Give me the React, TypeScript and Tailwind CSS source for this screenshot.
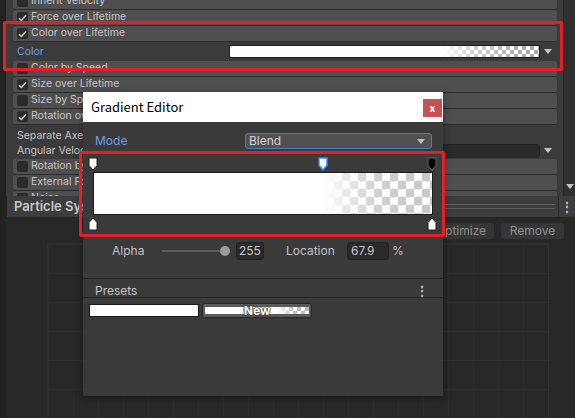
import React from "react";

const UI = "font-['Inter','Noto_Sans',sans-serif]";

function Check() {
  return (
    <svg width="9" height="8" viewBox="0 0 9 8">
      <path d="M1 4.2 L3.4 6.5 L8 1.2" fill="none" stroke="#d2d2d2" strokeWidth="1.4" />
    </svg>
  );
}

function Arrow({ color = "#c4c4c4" }: { color?: string }) {
  return (
    <svg width="8" height="5" viewBox="0 0 8 5">
      <path d="M0 0 H8 L4 5 Z" fill={color} />
    </svg>
  );
}

function ModuleRow({ label, checked }: { label: string; checked?: boolean }) {
  return (
    <div className="flex h-[16px] shrink-0 items-center rounded-[3px] border-b border-[#2b2b2b] bg-[#4f4f4f] pl-[4px]">
      <div className="flex h-[11px] w-[11px] items-center justify-center rounded-[2px] bg-[#2b2b2b]">
        {checked && <Check />}
      </div>
      <span className="ml-[3px] text-[10.5px] leading-none text-[#c6c6c6]">{label}</span>
    </div>
  );
}

function TopMarker({ left, kind }: { left: string; kind: "white" | "sel" | "black" }) {
  const fill = kind === "black" ? "#000" : "#fff";
  const stroke = kind === "sel" ? "#2f8cf0" : kind === "black" ? "#6a6a6a" : "#1e1e1e";
  return (
    <svg width="10" height="14" viewBox="0 0 10 14" className="absolute top-0" style={{ left }}>
      <path d="M1 1 H9 V8.5 L5 13 L1 8.5 Z" fill={fill} stroke={stroke} strokeWidth={kind === "sel" ? 1.5 : 1} />
    </svg>
  );
}

function BottomMarker({ left }: { left: string }) {
  return (
    <svg width="10" height="14" viewBox="0 0 10 14" className="absolute top-0" style={{ left }}>
      <path d="M1 13 H9 V5.5 L5 1 L1 5.5 Z" fill="#fff" stroke="#1e1e1e" strokeWidth="1" />
    </svg>
  );
}

function Checker({ cell, fade }: { cell: string; fade: string }) {
  return (
    <div className={`relative h-full w-full ${cell}`}>
      <div className={`absolute inset-0 ${fade}`} />
    </div>
  );
}

function GradientEditor() {
  return (
    <div className={`absolute left-[83px] top-[92px] flex h-[304px] w-[360px] flex-col overflow-hidden bg-[#3a3a3a] shadow-[0_2px_8px_rgba(0,0,0,0.4)] ${UI}`}>
      <div className="relative flex h-[30px] shrink-0 items-center bg-white pl-[8px]">
        <span className="font-['Noto_Sans_CJK_SC','Noto_Sans',sans-serif] text-[13px] text-black">Gradient Editor</span>
        <div className="absolute right-[1px] top-[7px] flex h-[18px] w-[19px] items-center justify-center bg-[#c75050] text-[10px] font-bold leading-none text-white">
          x
        </div>
      </div>

      <div className="mt-[11px] flex h-[16px] shrink-0 items-center justify-between pl-[12px] pr-[11px]">
        <span className="text-[12px] text-[#6f9ee4]">Mode</span>
        <div className="flex h-[16px] w-[187px] items-center justify-between rounded-[3px] border border-[#3b7fd6] bg-[#515151] pl-[3px] pr-[6px]">
          <span className="text-[12px] leading-none text-[#d4d4d4]">Blend</span>
          <Arrow color="#bdbdbd" />
        </div>
      </div>

      <div className="ml-[5px] mt-[8px] w-[349px] shrink-0">
        <div className="relative h-[14px]">
          <TopMarker left="0px" kind="white" />
          <TopMarker left="230px" kind="sel" />
          <TopMarker left="339px" kind="black" />
        </div>
        <div className="ml-[5px] mt-[1px] h-[43px] w-[340px] border border-[#1c1c1c]">
          <Checker
            cell="bg-[conic-gradient(#c8c8c8_25%,#ffffff_0_50%,#c8c8c8_0_75%,#ffffff_0)] bg-[length:16px_16px]"
            fade="bg-[linear-gradient(90deg,#fff_0%,#fff_68%,rgba(255,255,255,0.6)_74%,rgba(255,255,255,0.15)_84%,rgba(255,255,255,0)_100%)]"
          />
        </div>
        <div className="relative mt-[2px] h-[14px]">
          <BottomMarker left="0px" />
          <BottomMarker left="339px" />
        </div>
      </div>

      <div className="mt-[11px] flex h-[18px] shrink-0 items-center pl-[29px]">
        <span className="w-[50px] text-[12px] text-[#c2c2c2]">Alpha</span>
        <div className="relative flex h-[18px] w-[69px] items-center">
          <div className="h-[2px] w-[64px] bg-[#5e5e5e]" />
          <div className="absolute left-[58px] h-[10px] w-[10px] rounded-full bg-[#9c9c9c]" />
        </div>
        <div className="ml-[5px] flex h-[18px] w-[28px] items-center rounded-[3px] border border-[#222] bg-[#2a2a2a] pl-[2px] text-[12px] text-[#c8c8c8]">
          255
        </div>
        <span className="ml-[22px] w-[61px] text-[12px] text-[#c2c2c2]">Location</span>
        <div className="flex h-[18px] w-[42px] items-center rounded-[3px] border border-[#222] bg-[#2a2a2a] pl-[3px] text-[12px] text-[#c8c8c8]">
          67.9
        </div>
        <span className="ml-[3px] text-[12px] text-[#c2c2c2]">%</span>
      </div>

      <div className="mt-[18px] flex h-[20px] shrink-0 items-center justify-between border-y border-[#262626] pl-[12px] pr-[15px] pt-[5px]">
        <span className="text-[12px] leading-none text-[#c4c4c4]">Presets</span>
        <span className="text-[12px] font-bold leading-none text-[#c4c4c4]">⋮</span>
      </div>

      <div className="mt-[5px] flex shrink-0 items-center pl-[6px]">
        <div className="h-[13px] w-[110px] border border-[#1a1a1a] bg-white" />
        <div className="relative ml-[3px] flex h-[15px] w-[110px] items-center justify-center rounded-[2px] border border-[#262626] bg-[#5a5a5a] px-[2px]">
          <div className="h-[7px] w-full bg-[conic-gradient(#bbbbbb_25%,#ffffff_0_50%,#bbbbbb_0_75%,#ffffff_0)] bg-[length:8px_8px]">
            <div className="h-full w-full bg-[linear-gradient(90deg,#fff_0%,#fff_68%,rgba(255,255,255,0.1)_85%,rgba(255,255,255,0)_100%)]" />
          </div>
          <span className="absolute text-[12px] font-extrabold leading-none text-white [text-shadow:0_0_2px_#000,0_0_1px_#000,0_0_1px_#000]">
            New
          </span>
        </div>
      </div>
    </div>
  );
}

export default function App() {
  return (
    <div className={`relative flex h-[418px] w-[575px] overflow-hidden bg-[#232323] ${UI}`}>
      <div className="w-[6px] shrink-0 bg-[#222]" />
      <div className="flex min-w-0 flex-1 flex-col">
        <div className="flex h-[196px] shrink-0 overflow-hidden bg-[#3b3b3b]">
          <div className="ml-[7px] mr-[6px] mt-[-6px] flex flex-1 flex-col">
            <ModuleRow label="Inherit Velocity" />
            <ModuleRow label="Force over Lifetime" checked />
            <ModuleRow label="Color over Lifetime" checked />
            <div className="flex h-[19px] shrink-0 items-center pl-[4px]">
              <span className="w-[212px] text-[10.5px] text-[#6f9ee4]">Color</span>
              <div className="h-[13px] w-[311px] border border-[#1e1e1e]">
                <Checker
                  cell="bg-[conic-gradient(#a8a8a8_25%,#ffffff_0_50%,#a8a8a8_0_75%,#ffffff_0)] bg-[length:8px_8px]"
                  fade="bg-[linear-gradient(90deg,#fff_0%,#fff_68%,rgba(255,255,255,0.5)_78%,rgba(255,255,255,0.1)_92%,rgba(255,255,255,0)_100%)]"
                />
              </div>
              <div className="ml-[4px]">
                <Arrow />
              </div>
            </div>
            <ModuleRow label="Color by Speed" />
            <ModuleRow label="Size over Lifetime" checked />
            <ModuleRow label="Size by Speed" />
            <ModuleRow label="Rotation over Lifetime" checked />
            <div className="flex h-[34px] shrink-0 flex-col pt-[3px] text-[10.5px] text-[#c4c4c4]">
              <div className="flex h-[15px] items-center pl-[4px]">Separate Axes</div>
              <div className="flex h-[15px] items-center pl-[4px]">
                <span className="w-[212px]">Angular Velocity</span>
                <div className="h-[14px] w-[311px] rounded-[3px] border border-[#242424] bg-[#2a2a2a]" />
                <div className="ml-[4px]">
                  <Arrow />
                </div>
              </div>
            </div>
            <ModuleRow label="Rotation by Speed" />
            <ModuleRow label="External Forces" />
            <ModuleRow label="Noise" />
          </div>
          <div className="flex w-[12px] shrink-0 flex-col items-center justify-end border-l border-[#262626] bg-[#2f2f2f] pb-[7px]">
            <Arrow />
          </div>
        </div>

        <div className="ml-[1px] flex h-[22px] shrink-0 items-center border-b border-[#232323] bg-[#3d3d3d]">
          <span className="pl-[7px] text-[13px] font-semibold text-[#c8c8c8]">Particle System</span>
          <div className="ml-[60px] flex flex-1 flex-col gap-[3px]">
            <div className="h-[1px] bg-[#5e5e5e]" />
            <div className="h-[1px] bg-[#5e5e5e]" />
          </div>
          <div className="ml-[3px] flex h-full w-[17px] items-center justify-center border-l border-[#2a2a2a] text-[12px] font-bold text-[#c4c4c4]">
            ⋮
          </div>
        </div>

        <div className="flex flex-1 flex-col bg-[#282828]">
          <div className="flex h-[24px] shrink-0 items-center justify-end gap-[7px] pr-[11px] pt-[2px]">
            <div className="flex h-[16px] w-[66px] items-center justify-center rounded-[3px] bg-[#363636] text-[12px] text-[#8e8e8e]">
              Optimize
            </div>
            <div className="flex h-[16px] w-[63px] items-center justify-center rounded-[3px] bg-[#363636] text-[12px] text-[#8e8e8e]">
              Remove
            </div>
          </div>
          <div className="ml-[41px] mr-[26px] mt-[1px] flex-1 border-l border-t border-r border-[#303030] bg-[linear-gradient(#2e2e2e_1px,transparent_1px),linear-gradient(90deg,#2c2c2c_1px,transparent_1px)] bg-[length:25px_29px]" />
        </div>
      </div>

      <GradientEditor />

      <div className="pointer-events-none absolute left-[3px] top-[21px] h-[50px] w-[560px] rounded-[2px] border-[3px] border-[#e41f2a]" />
      <div className="pointer-events-none absolute left-[79px] top-[151px] h-[86px] w-[366px] rounded-[2px] border-[3px] border-[#e41f2a]" />
    </div>
  );
}
